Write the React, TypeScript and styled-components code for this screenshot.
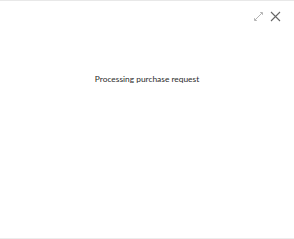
import styled, { createGlobalStyle } from "styled-components";

const GlobalStyle = createGlobalStyle`
  html, body {
    margin: 0;
    padding: 0;
    background: #fff;
  }
  #root {
    height: 100vh;
  }
`;

const Dialog = styled.div`
  box-sizing: border-box;
  height: 239px;
  width: 294px;
  border-top: 1px solid #e8e8e8;
  border-bottom: 1px solid #ececec;
  background: #fff;
  display: flex;
  flex-direction: column;
  font-family: Lato, "Open Sans", sans-serif;
`;

const Toolbar = styled.div`
  display: flex;
  justify-content: flex-end;
  align-items: center;
  gap: 5px;
  padding: 9px 13px 0 0;
`;

const IconButton = styled.button<{ $tone: string }>`
  border: 0;
  background: none;
  padding: 0;
  width: 12px;
  height: 12px;
  display: flex;
  align-items: center;
  justify-content: center;
  color: ${({ $tone }) => $tone};
  cursor: pointer;
`;

const Body = styled.div`
  display: flex;
  justify-content: center;
  padding-top: 51px;
`;

const Message = styled.p`
  margin: 0;
  font-size: 8.4px;
  color: #2a2a2a;
  line-height: 12px;
`;

export default function App() {
  return (
    <>
      <GlobalStyle />
      <Dialog>
        <Toolbar>
          <IconButton $tone="#ababab" aria-label="Expand">
            <svg width="11" height="11" viewBox="0 0 11 11" fill="none" stroke="currentColor" strokeWidth="0.9">
              <path d="M2 9 L9 2" />
              <path d="M7.2 1.5 H9.5 V3.8" />
              <path d="M1.5 7.2 V9.5 H3.8" />
            </svg>
          </IconButton>
          <IconButton $tone="#666" aria-label="Close">
            <svg width="11" height="11" viewBox="0 0 11 11" fill="none" stroke="currentColor" strokeWidth="1.1">
              <path d="M1 1 L10 10 M10 1 L1 10" />
            </svg>
          </IconButton>
        </Toolbar>
        <Body>
          <Message>Processing purchase request</Message>
        </Body>
      </Dialog>
    </>
  );
}
